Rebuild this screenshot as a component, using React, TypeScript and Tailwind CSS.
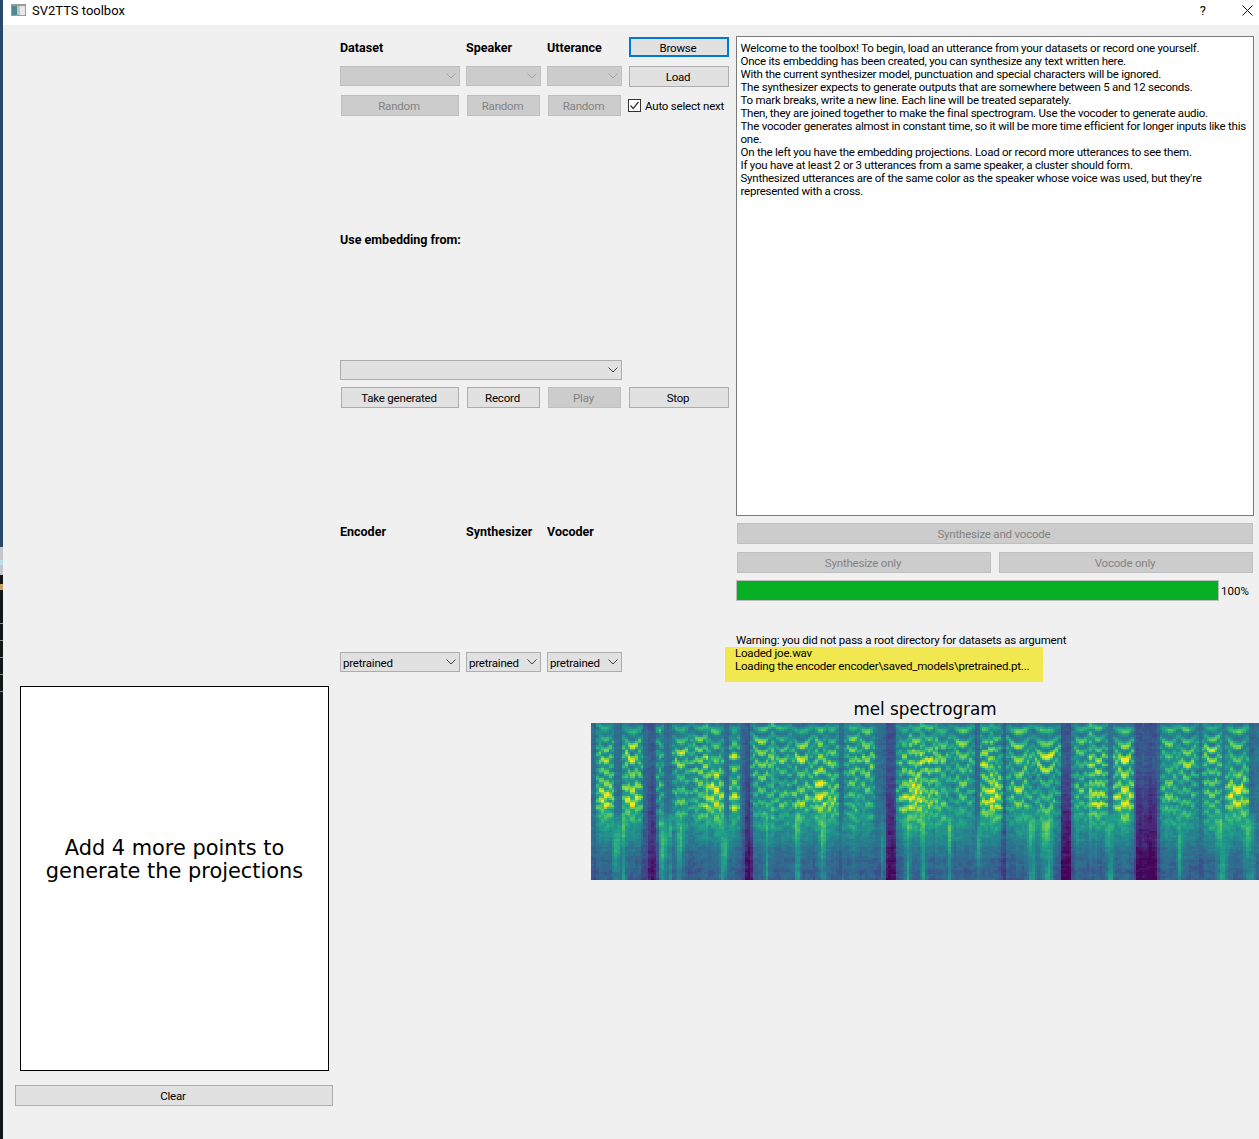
import { ReactNode, useMemo } from "react";

const uiFont = "font-['Roboto','Noto_Sans',sans-serif]";

const welcomeLines = [
  "Welcome to the toolbox! To begin, load an utterance from your datasets or record one yourself.",
  "Once its embedding has been created, you can synthesize any text written here.",
  "With the current synthesizer model, punctuation and special characters will be ignored.",
  "The synthesizer expects to generate outputs that are somewhere between 5 and 12 seconds.",
  "To mark breaks, write a new line. Each line will be treated separately.",
  "Then, they are joined together to make the final spectrogram. Use the vocoder to generate audio.",
  "The vocoder generates almost in constant time, so it will be more time efficient for longer inputs like this",
  "one.",
  "On the left you have the embedding projections. Load or record more utterances to see them.",
  "If you have at least 2 or 3 utterances from a same speaker, a cluster should form.",
  "Synthesized utterances are of the same color as the speaker whose voice was used, but they're",
  "represented with a cross.",
];

// page x ranges of the voiced parts of the utterance
const segments = [
  [598, 614], [624, 641], [656, 663], [672, 690], [692, 708], [708, 724], [730, 739], [752, 772], [772, 792], [792, 811], [815, 826], [826, 839],
  [845, 860], [860, 874], [898, 910], [910, 922], [922, 936], [936, 950], [953, 973], [980, 991], [991, 1002], [1007, 1030], [1033, 1060],
  [1073, 1090], [1090, 1107], [1115, 1134], [1160, 1178], [1178, 1197], [1202, 1222], [1227, 1248],
];
const bars = [
  [617, 2.5], [623, 1.2], [663, 3], [670, 1.2], [680, 1.5], [725, 3], [767, 1.2], [797, 2], [823, 2], [842, 1.2], [883, 1.2],
  [908, 1.5], [923, 1.2], [950, 1.2], [978, 1.5], [1032, 2.5], [1047, 3.5], [1110, 2.5], [1180, 1.2], [1222, 3.5], [1250, 3.5],
];
const darkGaps = [[649, 658, 0.2], [745, 752, 0.24], [838, 844, 0.1], [885, 897, 0.22], [1060, 1071, 0.26], [1137, 1157, 0.26], [640, 648, 0.06], [1000, 1006, 0.08]];
const desktopMarks = [33, 16, 16, 16, 16];

const viridis = ["#440154", "#482878", "#3e4989", "#31688e", "#26828e", "#1f9e89", "#35b779", "#6ece58", "#b5de2b", "#fde725"];

function hexMix(t: number) {
  const p = Math.min(0.999, Math.max(0, t)) * (viridis.length - 1);
  const i = Math.floor(p);
  const f = p - i;
  const a = parseInt(viridis[i].slice(1), 16);
  const b = parseInt(viridis[i + 1].slice(1), 16);
  const ch = (s: number) => Math.round(((a >> s) & 255) * (1 - f) + ((b >> s) & 255) * f);
  return `rgb(${ch(16)},${ch(8)},${ch(0)})`;
}

const gauss = (x: number, m: number, s: number) => Math.exp(-((x - m) * (x - m)) / (2 * s * s));
const ramp = (x: number, a: number, b: number) => Math.max(0, Math.min(1, (x - a) / (b - a)));

function Spectrogram() {
  const paths = useMemo(() => {
    let seed = 12345;
    const rnd = () => {
      seed = (seed * 1664525 + 1013904223) % 4294967296;
      return seed / 4294967296;
    };
    const cols = 256;
    const rows = 80;
    const levels = 32;
    const buckets: string[] = Array.from({ length: levels }, () => "");
    const rowNoise = Array.from({ length: rows }, () => (rnd() - 0.5) * 0.05);
    const grid: number[][] = [];
    for (let c = 0; c < cols; c++) {
      const px = 591 + (c + 0.5) * (668 / cols);
      const colNoise = (rnd() - 0.5) * 0.07;
      const col: number[] = [];
      for (let r = 0; r < rows; r++) {
        const y = (r + 0.5) * (157 / rows);
        let v = 0.34 - 0.09 * ramp(y, 115, 150) + colNoise + rowNoise[r] + (rnd() - 0.5) * 0.13;
        segments.forEach(([x0, x1], idx) => {
          if (px < x0 - 1 || px > x1 + 1) return;
          const u = ramp(px, x0, x1);
          const env = 0.5 + 0.5 * Math.sin(Math.PI * (u * 0.86 + 0.07));
          // harmonics sit at a near even spacing and bend into chevrons
          const spacing = (9.5 + (idx * 3) % 4) * (0.8 + 0.38 * Math.sin(Math.PI * u));
          const h = (y + 6) / spacing;
          const k = Math.round(h);
          const stripe = Math.pow(Math.max(0, 1 - Math.abs(h - k) * 2.6), 1.2);
          const spot = 0.6 + 0.4 * Math.pow(0.5 + 0.5 * Math.sin(k * 1.7 + idx * 2.3 + u * 3), 2);
          const a1 = 0.1 + 0.22 * (0.5 + 0.5 * Math.sin(idx * 2.1));
          const a2 = 0.06 + 0.38 * Math.pow(0.5 + 0.5 * Math.sin(idx * 1.3 + 1), 2);
          const amp = (0.3 + a1 * gauss(y, 34, 13) * 1.6 + a2 * gauss(y, 72, 13) * 1.6) * (1 - ramp(y, 82, 120));
          v += env * (stripe * spot * amp * 1.5 + a2 * gauss(y, 78, 18) * 0.3 + 0.06 + 0.07 * gauss(y, 100, 14));
        });
        for (const [b, w] of bars) {
          v += 0.3 * gauss(px, b, w) * ramp(y, 85, 104) * (0.85 + 0.3 * Math.sin(px * 0.4 + y * 0.1));
        }
        for (const [g0, g1, amt] of darkGaps) {
          if (px >= g0 && px <= g1) v -= amt * (0.3 + 0.7 * ramp(y, 45, 105));
        }
        col.push(v);
      }
      grid.push(col);
    }
    for (let c = 0; c < cols; c++) {
      for (let r = 0; r < rows; r++) {
        const prev = grid[Math.max(0, c - 1)][r];
        const next = grid[Math.min(cols - 1, c + 1)][r];
        const up = grid[c][Math.max(0, r - 1)];
        const down = grid[c][Math.min(rows - 1, r + 1)];
        let v = grid[c][r] * 0.5 + (prev + next + up + down) * 0.125;
        if (v > 0.74) v = 0.74 + (v - 0.74) * 0.6;
        const i = Math.max(0, Math.min(levels - 1, Math.floor(v * levels)));
        buckets[i] += `M${c} ${r}h1v1h-1z`;
      }
    }
    return buckets.map((d, i) => ({ d, fill: hexMix((i + 0.5) / levels) }));
  }, []);

  return (
    <svg viewBox="0 0 256 80" preserveAspectRatio="none" className="block w-[668px] h-[157px]" shapeRendering="crispEdges">
      {paths.map((p) => (p.d ? <path key={p.fill} d={p.d} fill={p.fill} /> : null))}
    </svg>
  );
}

function Chevron({ disabled }: { disabled?: boolean }) {
  return (
    <svg width="10" height="6" viewBox="0 0 10 6" className="shrink-0" fill="none">
      <path d="M0.5 0.5L5 5L9.5 0.5" stroke={disabled ? "#a2a2a2" : "#404040"} strokeWidth="1" />
    </svg>
  );
}

function Combo({ label, disabled, className }: { label?: string; disabled?: boolean; className?: string }) {
  return (
    <div className={`h-5 flex items-center justify-between pl-[2px] pr-[3px] border text-black ${disabled ? "bg-[#cccccc] border-[#bfbfbf]" : "bg-[#e1e1e1] border-[#adadad]"} ${className ?? ""}`}>
      <span className="pt-[3px]">{label}</span>
      <Chevron disabled={disabled} />
    </div>
  );
}

function Btn({ children, disabled, className }: { children: ReactNode; disabled?: boolean; className?: string }) {
  return (
    <button className={`h-[21px] flex items-center justify-center border pt-[3px] pr-[2px] ${disabled ? "bg-[#cccccc] border-[#bfbfbf] text-[#838383]" : "bg-[#e1e1e1] border-[#adadad] text-black"} ${className ?? ""}`}>
      {children}
    </button>
  );
}

function Label({ children }: { children: ReactNode }) {
  return <div className="font-bold text-[12.5px] tracking-normal pt-[2px] text-black whitespace-nowrap">{children}</div>;
}

const rowClass = "grid grid-cols-[120px_75px_75px_100px] gap-x-[6px]";

function Controls() {
  return (
    <div className="w-[389px] text-[11.5px] tracking-[-0.2px] shrink-0">
      <div className={`${rowClass} h-[22px] items-center`}>
        <Label>Dataset</Label>
        <Label>Speaker</Label>
        <Label>Utterance</Label>
        <button className="ml-px h-5 w-[100px] bg-[#e1e1e1] border-2 border-[#0078d7] text-black flex items-center justify-center pt-[3px] pr-[2px]">Browse</button>
      </div>
      <div className={`${rowClass} mt-2 h-[21px]`}>
        <Combo disabled />
        <Combo disabled />
        <Combo disabled />
        <Btn className="ml-px w-[100px]">Load</Btn>
      </div>
      <div className={`${rowClass} mt-2 h-[21px]`}>
        <Btn disabled className="mx-px">Random</Btn>
        <Btn disabled className="mx-px">Random</Btn>
        <Btn disabled className="mx-px">Random</Btn>
        <div className="flex items-center gap-1 whitespace-nowrap text-black">
          <span className="w-[13px] h-[13px] border border-[#333333] bg-white flex items-center justify-center">
            <svg width="11" height="11" viewBox="0 0 11 11" fill="none">
              <path d="M1.5 5.5L4.2 8.5L9.5 2" stroke="#333333" strokeWidth="1.2" />
            </svg>
          </span>
          <span className="pt-[3px]">Auto select next</span>
        </div>
      </div>
      <div className="h-[244px] pt-[3px] flex items-center">
        <Label>Use embedding from:</Label>
      </div>
      <div className={rowClass}>
        <Combo className="col-span-3" />
      </div>
      <div className={`${rowClass} mt-[7px]`}>
        <Btn className="mx-px">Take generated</Btn>
        <Btn className="mx-px">Record</Btn>
        <Btn disabled className="mx-px">Play</Btn>
        <Btn className="ml-px w-[100px]">Stop</Btn>
      </div>
      <div className={`${rowClass} h-[244px] pt-[3px] items-center`}>
        <Label>Encoder</Label>
        <Label>Synthesizer</Label>
        <Label>Vocoder</Label>
      </div>
      <div className={rowClass}>
        <Combo label="pretrained" />
        <Combo label="pretrained" />
        <Combo label="pretrained" />
      </div>
    </div>
  );
}

function TextPanel() {
  return (
    <div className="w-[523px] text-[11.5px] tracking-[-0.2px] text-black">
      <div className="w-[518px] h-[480px] bg-white border border-[#7a7a7a] pt-[5px] px-[3.5px] tracking-[-0.24px] leading-[13px]">
        {welcomeLines.map((line) => (
          <div key={line} className="whitespace-nowrap">{line}</div>
        ))}
      </div>
      <Btn disabled className="mt-[7px] ml-px w-[516px]">Synthesize and vocode</Btn>
      <div className="mt-2 ml-px w-[516px] flex gap-2">
        <Btn disabled className="flex-1">Synthesize only</Btn>
        <Btn disabled className="flex-1">Vocode only</Btn>
      </div>
      <div className="mt-[7px] flex items-center">
        <div className="w-[483px] h-[21px] border border-[#bcbcbc] bg-[#e6e6e6]">
          <div className="h-full w-full bg-[#06b025]" />
        </div>
        <span className="ml-[2px] pt-[3px] tracking-normal">100%</span>
      </div>
      <div className="mt-[33px] leading-[13px] whitespace-nowrap">Warning: you did not pass a root directory for datasets as argument</div>
      <div className="-ml-[11px] w-[318px] h-[35px] bg-[#f1e74f] pl-[10px] leading-[13px] whitespace-nowrap">
        <div>Loaded joe.wav</div>
        <div>Loading the encoder encoder\saved_models\pretrained.pt...</div>
      </div>
    </div>
  );
}

function ProjectionsPanel() {
  return (
    <div className="w-[337px] shrink-0 pt-[661px] text-[11.5px] tracking-[-0.2px]">
      <div className="ml-[17px] w-[309px] h-[385px] pb-[38px] bg-white border border-black flex items-center justify-center text-center font-['DejaVu_Sans',sans-serif] text-[20.9px] tracking-normal leading-[23px] text-black">
        <div>
          Add 4 more points to
          <br />
          generate the projections
        </div>
      </div>
      <Btn className="mt-[14px] ml-[12px] w-[318px]">Clear</Btn>
    </div>
  );
}

function TitleBar() {
  return (
    <div className="h-[25px] bg-white flex items-center text-black">
      <svg width="15" height="12" viewBox="0 0 15 12" className="ml-[8px] -mt-[5px]">
        <rect x="0.5" y="0.5" width="14" height="11" fill="#e8e8e8" stroke="#9a9a9a" />
        <rect x="1" y="2" width="5" height="9" fill="#4f8a8f" />
        <rect x="6" y="2" width="3" height="9" fill="#b5c8c8" />
        <rect x="1" y="1" width="13" height="1" fill="#8f9aaf" />
      </svg>
      <span className="ml-[6px] -mt-[4px] text-[13px]">SV2TTS toolbox</span>
      <span className="ml-auto mr-[36px] -mt-[4px] text-[13px]">?</span>
      <svg width="11" height="11" viewBox="0 0 11 11" className="mr-[6px] -mt-[5px]" fill="none">
        <path d="M0.5 0.5L10.5 10.5M10.5 0.5L0.5 10.5" stroke="#111111" strokeWidth="1" />
      </svg>
    </div>
  );
}

export default function App() {
  return (
    <div className={`w-[1259px] h-[1139px] overflow-hidden flex bg-[#f0f0f0] ${uiFont}`}>
      {/* sliver of the desktop behind the window */}
      <div className="w-[3px] shrink-0 flex flex-col">
        <div className="h-[547px] bg-[#27496a]" />
        <div className="h-[13px] bg-[#c4c8ca]" />
        <div className="h-[5px] bg-[#bcdcec]" />
        <div className="h-[10px] bg-[#c4c8ca]" />
        <div className="flex-1 bg-[#14171a]">
          <div className="mt-[9px] h-[6px] bg-[#c8a060]" />
          {desktopMarks.map((gap, i) => (
            <div key={i} className="h-px bg-[#8a8a80]" style={{ marginTop: gap }} />
          ))}
        </div>
      </div>
      <div className="flex-1 flex flex-col min-w-0">
        <TitleBar />
        <div className="flex-1 flex min-h-0">
          <ProjectionsPanel />
          <div className="flex-1 min-w-0">
            <div className="flex pt-[11px] gap-[7px]">
              <Controls />
              <TextPanel />
            </div>
            <div className="ml-[251px] mt-[15px] w-[668px]">
              <div className="text-center font-['DejaVu_Sans',sans-serif] text-[16.8px] leading-[24px] text-black">mel spectrogram</div>
              <div className="mt-[2px]">
                <Spectrogram />
              </div>
            </div>
          </div>
        </div>
      </div>
    </div>
  );
}
